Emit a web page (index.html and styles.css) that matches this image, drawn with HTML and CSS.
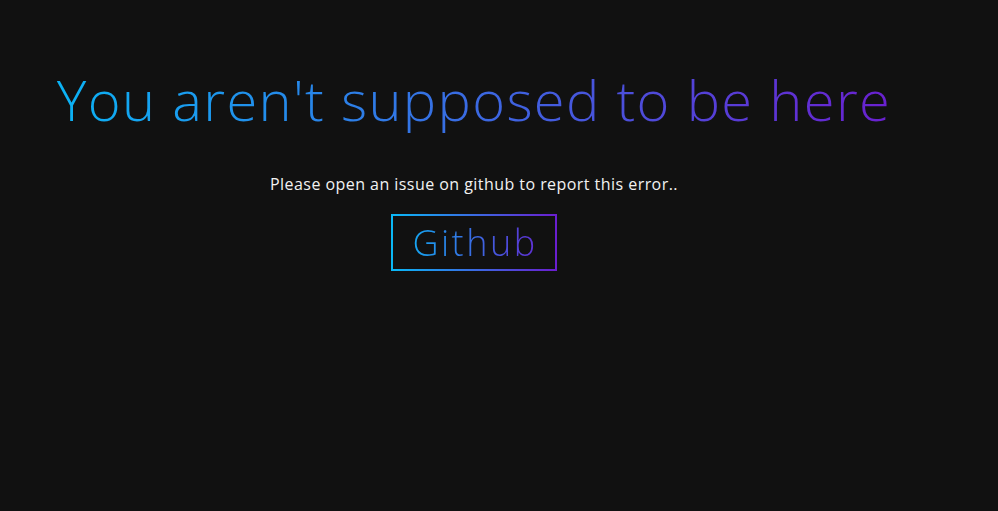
FILE: index.html
```html
<!DOCTYPE html>
<html lang="en">
<head>
<meta charset="utf-8">
<title>Not found</title>
<link rel="stylesheet" href="styles.css">
</head>
<body>
<main class="page">
  <h1 class="title">You aren't supposed to be here</h1>
  <p class="msg">Please open an issue on github to report this error..</p>
  <a class="btn" href="#"><span class="btn-text">Github</span></a>
</main>
</body>
</html>
```
FILE: styles.css
```css
html, body {
  margin: 0;
  padding: 0;
  background: #111111;
  height: 100%;
}
.page {
  display: flex;
  flex-direction: column;
  align-items: center;
  padding: 65px 50px 0 0;
  font-family: "Open Sans", "DejaVu Sans", sans-serif;
}
.title {
  margin: 0;
  font-size: 56px;
  font-weight: 300;
  line-height: 68px;
  letter-spacing: 1.35px;
  background: linear-gradient(to right, #0bb3f5, #6a20cf);
  -webkit-background-clip: text;
  background-clip: text;
  color: transparent;
}
.msg {
  margin: 41px 0 0;
  font-size: 16px;
  font-weight: 500;
  letter-spacing: 0.45px;
  color: #f2f2f2;
  line-height: 20px;
}
.btn {
  margin-top: 20px;
  display: flex;
  align-items: center;
  justify-content: center;
  width: 162px;
  height: 53px;
  border: 2px solid;
  border-image: linear-gradient(to right, #0ab8f6, #6a1ecf) 1;
  text-decoration: none;
  background-image: linear-gradient(to right, #0ab8f6, #6a1ecf);
  -webkit-background-clip: text;
  background-clip: text;
  color: transparent;
}
.btn-text {
  font-size: 36px;
  font-weight: 300;
  line-height: 40px;
  letter-spacing: 2.5px;
  padding-left: 2px;
}
```
